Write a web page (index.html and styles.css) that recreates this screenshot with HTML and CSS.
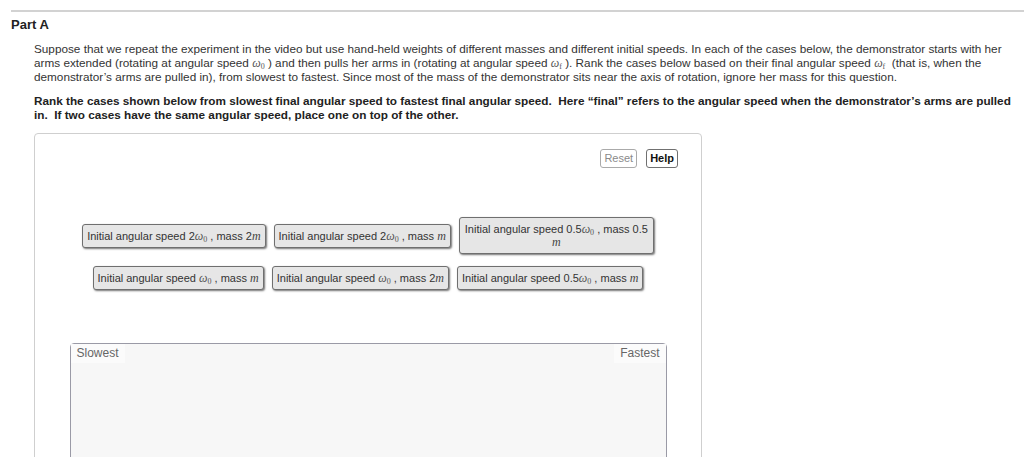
FILE: index.html
```html
<!DOCTYPE html>
<html>
<head>
<meta charset="utf-8">
<title>Part A</title>
<link rel="stylesheet" href="styles.css">
</head>
<body>
<div class="page">
  <div class="rule"></div>
  <h2 class="part">Part A</h2>
  <div class="content">
    <p class="intro">Suppose that we repeat the experiment in the video but use hand-held weights of different masses and different initial speeds. In each of the cases below, the demonstrator starts with her arms extended (rotating at angular speed <span class="math">ω<sub>0</sub></span> ) and then pulls her arms in (rotating at angular speed <span class="math">ω<sub>f</sub></span> ). Rank the cases below based on their final angular speed <span class="math">ω<sub>f</sub></span>&nbsp; (that is, when the demonstrator’s arms are pulled in), from slowest to fastest. Since most of the mass of the demonstrator sits near the axis of rotation, ignore her mass for this question.</p>
    <p class="task">Rank the cases shown below from slowest final angular speed to fastest final angular speed.&nbsp; Here “final” refers to the angular speed when the demonstrator’s arms are pulled in.&nbsp; If two cases have the same angular speed, place one on top of the other.</p>
    <div class="panel">
      <div class="tools">
        <button class="btn reset">Reset</button>
        <button class="btn help">Help</button>
      </div>
      <div class="tiles">
        <div class="row">
          <div class="tile">Initial angular speed 2<span class="math">ω<sub>0</sub></span> , mass 2<span class="var">m</span></div>
          <div class="tile">Initial angular speed 2<span class="math">ω<sub>0</sub></span> , mass <span class="var">m</span></div>
          <div class="tile">Initial angular speed 0.5<span class="math">ω<sub>0</sub></span> , mass 0.5 <span class="var">m</span></div>
        </div>
        <div class="row">
          <div class="tile">Initial angular speed <span class="math">ω<sub>0</sub></span> , mass <span class="var">m</span></div>
          <div class="tile">Initial angular speed <span class="math">ω<sub>0</sub></span> , mass 2<span class="var">m</span></div>
          <div class="tile">Initial angular speed 0.5<span class="math">ω<sub>0</sub></span> , mass <span class="var">m</span></div>
        </div>
      </div>
      <div class="drop">
        <div class="labels">
          <span class="label">Slowest</span>
          <span class="label">Fastest</span>
        </div>
      </div>
    </div>
  </div>
</div>
</body>
</html>
```

FILE: styles.css
```css
html {
  overflow: hidden;
}

body {
  margin: 0;
  background: #ffffff;
  font-family: "Liberation Sans", Arial, sans-serif;
  color: #333333;
}

.page {
  padding: 10px 0 0 11px;
}

.rule {
  height: 2px;
  background: #d2d2d2;
}

.part {
  margin: 5px 0 0;
  font-size: 13px;
  line-height: 16px;
  font-weight: bold;
  color: #222222;
}

.content {
  padding-left: 23px;
  width: 982px;
}

.intro,
.task {
  font-size: 11.75px;
  line-height: 14px;
  margin: 0;
}

.intro {
  margin-top: 9px;
}

.task {
  margin-top: 10px;
  font-weight: bold;
  color: #222222;
}

.math {
  font-family: "Liberation Serif", "DejaVu Serif", serif;
  font-style: italic;
  font-size: 12px;
  line-height: 0;
  color: #555555;
}

.math sub {
  font-style: normal;
  font-size: 8px;
  line-height: 0;
  vertical-align: -2px;
}

.var {
  font-family: "Liberation Serif", "DejaVu Serif", serif;
  font-style: italic;
  font-size: 12px;
  line-height: 0;
  color: #444444;
}

.panel {
  margin-top: 11px;
  width: 668px;
  box-sizing: border-box;
  border: 1px solid #cfcfcf;
  border-radius: 4px;
  padding-top: 15px;
  height: 340px;
}

.tools {
  display: flex;
  justify-content: flex-end;
  gap: 9px;
  padding-right: 23px;
}

.btn {
  height: 19px;
  box-sizing: border-box;
  padding: 0 3px;
  font-family: "Liberation Sans", Arial, sans-serif;
  font-size: 11px;
  line-height: 17px;
  background: #ffffff;
  border-radius: 3px;
}

.reset {
  color: #8a8a8a;
  border: 1px solid #aaaaaa;
}

.help {
  color: #111111;
  font-weight: bold;
  border: 1px solid #707070;
}

.tiles {
  margin-top: 49px;
  display: flex;
  flex-direction: column;
  gap: 12px;
}

.row {
  display: flex;
  justify-content: center;
  align-items: center;
  gap: 8px;
}

.tile {
  max-width: 195px;
  box-sizing: border-box;
  padding: 5px 4px 4px;
  font-size: 11px;
  line-height: 13px;
  text-align: center;
  color: #333333;
  background: #e6e6e6;
  border: 1px solid #6f6f6f;
  border-radius: 3px;
  box-shadow: 1px 1px 2px rgba(0, 0, 0, 0.55);
}

.drop {
  margin: 53px auto 0;
  width: 597px;
  height: 200px;
  box-sizing: border-box;
  background: #f7f7f7;
  border: 1px solid #9a9aa6;
  border-radius: 4px 4px 0 0;
}

.labels {
  display: flex;
  justify-content: space-between;
}

.label {
  padding: 2px 6px 3px;
  font-size: 12px;
  line-height: 14px;
  color: #666666;
  background: #fbfbfb;
}
```
